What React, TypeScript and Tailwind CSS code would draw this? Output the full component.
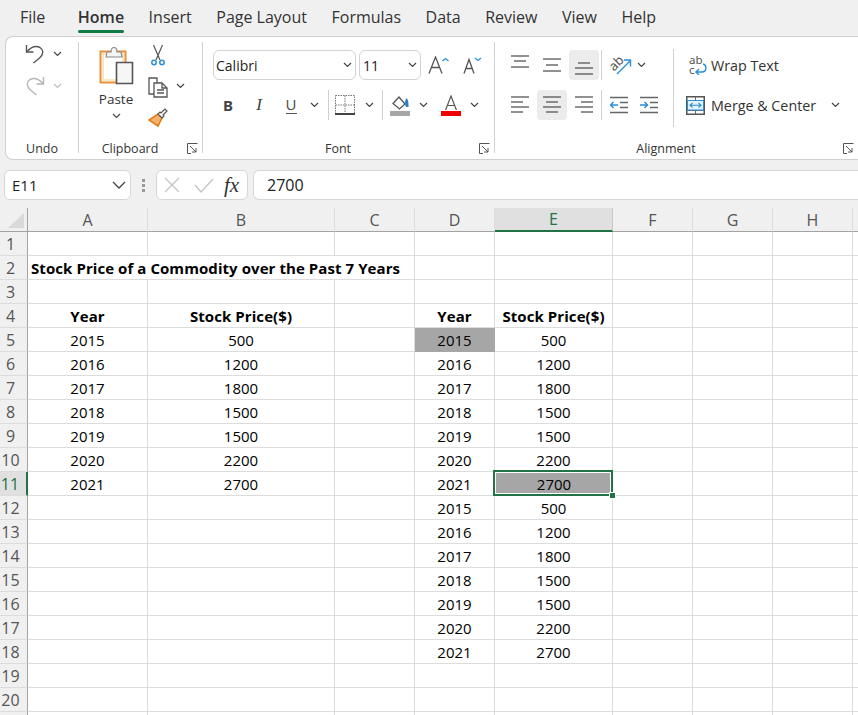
import type { ReactNode } from 'react'

const tabs = ['Insert', 'Page Layout', 'Formulas', 'Data', 'Review', 'View', 'Help']
const columns = ['A', 'B', 'C', 'D', 'E', 'F', 'G', 'H', '']
const years = ['2015', '2016', '2017', '2018', '2019', '2020', '2021']
const prices = ['500', '1200', '1800', '1500', '1500', '2200', '2700']

function Chevron({ muted = false }: { muted?: boolean }) {
  return (
    <svg width="9" height="6" viewBox="0 0 9 6" fill="none" stroke={muted ? '#bdbdbd' : '#444'} strokeWidth="1.2">
      <path d="M1 1l3.500 3.500L8 1" />
    </svg>
  )
}

function Launcher() {
  return (
    <svg width="11" height="11" viewBox="0 0 11 11" fill="none" stroke="#555" strokeWidth="1">
      <path d="M.5 10.500V.5h10M.5 10.500H4" />
      <path d="M3 3l6 6M9 5v4H5" />
    </svg>
  )
}

function GroupLabel({ children, launcher = false }: { children: string; launcher?: boolean }) {
  return (
    <div className="mt-auto mb-[1px] flex h-4 items-center text-[12.5px] text-[#333]">
      <div className="flex-1 text-center">{children}</div>
      {launcher && (
        <div className="-mt-[1px] flex w-[21px] justify-center pl-[2px]">
          <Launcher />
        </div>
      )}
    </div>
  )
}

function Sep({ className }: { className: string }) {
  return <div className={`w-px shrink-0 bg-[#d0d0d0] ${className}`} />
}

// horizontal line glyphs used by the alignment buttons
function Lines({ lines, active = false }: { lines: [number, number, number][]; active?: boolean }) {
  return (
    <div className={`flex h-[30px] w-[30px] items-center justify-center rounded ${active ? 'bg-[#ececec]' : ''}`}>
      <svg width="18" height="22" viewBox="0 0 18 22" fill="none" stroke="#555" strokeWidth="1.3">
        {lines.map(([x1, x2, y]) => (
          <path key={y} d={`M${x1} ${y}H${x2}`} />
        ))}
      </svg>
    </div>
  )
}

function Indent({ right = false }: { right?: boolean }) {
  return (
    <div className="flex h-[30px] w-[30px] items-center justify-center">
      <svg width="18" height="18" viewBox="0 0 18 18" fill="none" strokeWidth="1.3">
        <path d="M0 1.500h18M0 16.500h18M10 6.500h8M10 11.500h8" stroke="#666" />
        <path d={right ? 'M0 9h7.500M4.500 6l3 3-3 3' : 'M8 9H.5M3.500 6l-3 3 3 3'} stroke="#2b8fd6" strokeWidth="1.500" />
      </svg>
    </div>
  )
}

function UndoGroup() {
  return (
    <div className="flex h-[116px] w-[72px] shrink-0 flex-col">
      <div className="ml-[19px] mt-[2px] flex items-center">
        <svg width="20" height="20" viewBox="0 0 20 20" fill="none" stroke="#555" strokeWidth="1.4">
          <path d="M1.500 1v7h7" />
          <path d="M1.500 8C6 3 11 1.500 15 3.500c4 2.500 3.500 7-.5 10.500L8.500 19" />
        </svg>
        <div className="ml-[8px] flex">
          <Chevron />
        </div>
      </div>
      <div className="ml-[19px] mt-[12px] flex items-center">
        <svg width="20" height="20" viewBox="0 0 20 20" fill="none" stroke="#b5b5b5" strokeWidth="1.4">
          <path d="M18.500 1v7h-7" />
          <path d="M18.500 8C14 3 9 1.500 5 3.500c-4 2.500-3.500 7 .5 10.500L11.500 19" />
        </svg>
        <div className="ml-[8px] flex">
          <Chevron muted />
        </div>
      </div>
      <GroupLabel>Undo</GroupLabel>
    </div>
  )
}

function ClipboardGroup() {
  return (
    <div className="flex h-[116px] w-[123px] shrink-0 flex-col">
      <div className="flex">
        <div className="ml-[19px] flex w-[36px] flex-col items-center">
          <svg className="mt-[3px]" width="36" height="40" viewBox="0 0 36 40" fill="none">
            <path d="M2.500 6.500h25v31h-25z" fill="#fff" stroke="#e8903a" strokeWidth="2" />
            <path d="M5 9h20v26H5z" fill="#fff" stroke="#fbdfb0" strokeWidth="1.500" />
            <path d="M8 12l1-5h4c0-6 6-6 6 0h4l1 5z" fill="#f4f4f4" stroke="#888" strokeWidth="1.200" />
            <path d="M18.500 17.500h16v21h-16z" fill="#f6f6f6" stroke="#555" strokeWidth="1.600" />
          </svg>
          <div className="mt-[4px] text-[13.5px] leading-[20px] text-[#333]">Paste</div>
          <div className="mt-[4px] flex">
            <Chevron />
          </div>
        </div>
        <div className="ml-[14px] flex w-[20px] flex-col items-center">
          <svg className="mt-[3px]" width="14" height="21" viewBox="0 0 14 21" fill="none">
            <path d="M2.500 0l6.500 15M11.500 0L5 15" stroke="#555" strokeWidth="1.200" />
            <circle cx="3" cy="17.500" r="2.200" stroke="#2b8fd6" strokeWidth="1.500" />
            <circle cx="11" cy="17.500" r="2.200" stroke="#2b8fd6" strokeWidth="1.500" />
          </svg>
          <svg className="mt-[11px]" width="20" height="21" viewBox="0 0 20 21" fill="none" stroke="#555" strokeWidth="1.300">
            <path d="M6 17H1V1h8v5" />
            <path d="M6 6h8l5 5v9H6z" fill="#fff" />
            <path d="M14 6v5h5M9 13h7M9 16h7" />
          </svg>
          <svg className="mt-[10px]" width="20" height="20" viewBox="0 0 20 20" fill="none">
            <path d="M10 6l4 4-4 8-9-6z" fill="#f2b26b" stroke="#e07c1c" strokeWidth="1.600" />
            <path d="M10 6l4 4 2-2-1-1 4-4-2-2-4 4-1-1z" fill="#fff" stroke="#555" strokeWidth="1.200" />
          </svg>
        </div>
        <div className="ml-[8px] mt-[41px] flex h-[6px]">
          <Chevron />
        </div>
      </div>
      <GroupLabel launcher>Clipboard</GroupLabel>
    </div>
  )
}

function Select({ label, className }: { label: string; className: string }) {
  return (
    <div className={`flex h-[30px] items-center justify-between rounded-md border border-[#d2d2d2] pl-[2px] pr-[3px] text-[14px] text-[#222] ${className}`}>
      <span>{label}</span>
      <Chevron />
    </div>
  )
}

function FontGroup() {
  return (
    <div className="flex h-[116px] w-[291px] shrink-0 flex-col">
      <div className="ml-[10px] mt-[8px] flex items-center">
        <Select label="Calibri" className="w-[143px]" />
        <Select label="11" className="ml-[3px] w-[62px] !pl-[3px]" />
        <svg className="ml-[7px]" width="21" height="18" viewBox="0 0 21 18" fill="none">
          <path d="M1 17.500L7.500 1 14 17.500M3.500 11.500h8" stroke="#555" strokeWidth="1.300" />
          <path d="M14.500 5L17.500 2.500 20.500 5" stroke="#2b8fd6" strokeWidth="1.300" />
        </svg>
        <svg className="ml-[13px]" width="20" height="18" viewBox="0 0 20 18" fill="none">
          <path d="M2 17.500L7 3.500l5 14M3.800 12.500h6.400" stroke="#555" strokeWidth="1.300" />
          <path d="M13 2l3 2.500L19 2" stroke="#2b8fd6" strokeWidth="1.300" />
        </svg>
      </div>
      <div className="ml-[10px] mt-[10px] flex h-[30px] items-center text-[#444]">
        <div className="w-[30px] text-center font-['Noto_Sans'] text-[15px] font-bold">B</div>
        <div className="ml-px w-[30px] text-center font-['Liberation_Serif'] text-[17px] italic">I</div>
        <div className="ml-[2px] flex w-[30px] flex-col items-center">
          <span className="text-[15px] leading-[17px]">U</span>
          <div className="h-[1.500px] w-[11px] bg-[#555]" />
        </div>
        <div className="flex w-[16px] justify-center">
          <Chevron />
        </div>
        <Sep className="ml-[6px] h-[30px]" />
        <svg className="ml-[6px]" width="20" height="20" viewBox="0 0 20 20" fill="none" stroke="#777" strokeWidth="1" strokeDasharray="1.500 1">
          <path d="M.5.5h19v19H.5zM10 .5v19M.5 10h19" />
          <path d="M0 19h20" stroke="#444" strokeWidth="2" strokeDasharray="none" />
        </svg>
        <div className="ml-[6px] flex w-[16px] justify-center">
          <Chevron />
        </div>
        <Sep className="ml-[5px] h-[30px]" />
        <svg className="ml-[7px]" width="20" height="21" viewBox="0 0 20 21" fill="none">
          <path d="M3 8.500L9 2l6 7-5.500 5z" fill="#fff" stroke="#555" strokeWidth="1.300" />
          <path d="M15 9c0-3 .5-5.500 1.500-5.500S18.500 6 18.500 10v2H16z" fill="#2b7fc4" />
          <rect y="16" width="20" height="5" fill="#a6a6a6" />
        </svg>
        <div className="ml-[5px] flex w-[16px] justify-center">
          <Chevron />
        </div>
        <div className="ml-[10px] flex w-[20px] flex-col items-center">
          <svg width="12" height="15" viewBox="0 0 12 15" fill="none" stroke="#555" strokeWidth="1.200">
            <path d="M.6 15L6 1l5.400 14M2.300 10.500h7.400" />
          </svg>
          <div className="mt-[1px] h-[5px] w-[20px] bg-[#f00000]" />
        </div>
        <div className="ml-[5px] flex w-[16px] justify-center">
          <Chevron />
        </div>
      </div>
      <GroupLabel launcher>Font</GroupLabel>
    </div>
  )
}

function WrapIcon() {
  return (
    <div className="relative h-[20px] w-[18px] whitespace-pre-line font-['Noto_Sans',sans-serif] text-[11.5px] leading-[10px] text-[#555]">
      {'ab\nc'}
      <svg className="absolute bottom-0 right-0" width="12" height="12" viewBox="0 0 12 12" fill="none" stroke="#2b8fd6" strokeWidth="1.400">
        <path d="M1 9h6c5 0 5-7 1-8M4 6L1 9l3 3" />
      </svg>
    </div>
  )
}

function AlignmentGroup() {
  return (
    <div className="flex h-[116px] w-[363px] shrink-0 flex-col">
      <div className="flex">
        <div className="ml-[10px] mt-[8px] flex flex-col gap-[10px]">
          <div className="flex items-center gap-[2px]">
            <Lines lines={[[0, 18, 2], [3, 15, 7], [0, 18, 13]]} />
            <Lines lines={[[0, 18, 5], [3, 15, 11], [0, 18, 17]]} />
            <Lines active lines={[[3, 15, 9], [0, 18, 14], [0, 18, 20]]} />
            <Sep className="h-[30px]" />
            <div className="ml-[5px] flex items-center">
              <svg className="overflow-visible" width="22" height="20" viewBox="0 0 22 20" fill="none">
                <text x="0" y="13" transform="rotate(-45 7 9)" fontFamily="Noto Sans, sans-serif" fontSize="13" fill="#555">ab</text>
                <path d="M8 19L21 6M15 5h6.500v6.500" stroke="#2b8fd6" strokeWidth="1.400" />
              </svg>
              <div className="ml-[6px] flex">
                <Chevron />
              </div>
            </div>
          </div>
          <div className="flex items-center gap-[2px]">
            <Lines lines={[[0, 18, 3], [0, 12, 8], [0, 18, 13], [0, 12, 18]]} />
            <Lines active lines={[[0, 18, 3], [3, 15, 8], [0, 18, 13], [3, 15, 18]]} />
            <Lines lines={[[0, 18, 3], [6, 18, 8], [0, 18, 13], [6, 18, 18]]} />
            <Sep className="h-[30px]" />
            <Indent />
            <div className="-ml-[2px]">
              <Indent right />
            </div>
          </div>
        </div>
        <Sep className="ml-[9px] mt-[7px] h-[78px]" />
        <div className="mt-[8px] flex flex-col gap-[10px] text-[14.3px] text-[#333]">
          <div className="ml-[15px] flex h-[30px] items-center">
            <WrapIcon />
            <span className="ml-[4px] pt-[2px]">Wrap Text</span>
          </div>
          <div className="ml-[12px] flex h-[30px] items-center">
            <svg width="19" height="19" viewBox="0 0 19 19" fill="none">
              <rect x=".75" y=".75" width="17.500" height="17.500" fill="#fff" stroke="#555" strokeWidth="1.500" />
              <path d="M1 4.500h17M1 14.500h17M9.500 1v3M9.500 15v3" stroke="#666" />
              <rect x="1.500" y="4.500" width="16" height="9.500" fill="#e4f2fc" stroke="#2b8fd6" />
              <path d="M4 9.250h11M6.500 7L4 9.250l2.500 2.250M12.500 7L15 9.250l-2.500 2.250" stroke="#2b8fd6" strokeWidth="1.100" />
            </svg>
            <span className="ml-[6px] pt-[2px]">Merge &amp; Center</span>
            <div className="ml-[15px] flex">
              <Chevron />
            </div>
          </div>
        </div>
      </div>
      <GroupLabel launcher>Alignment</GroupLabel>
    </div>
  )
}

function Ribbon() {
  return (
    <div className="ml-[5px] flex h-[124px] w-[860px] rounded-l-lg border border-r-0 border-[#d0d0d0] bg-white pt-[5px]">
      <UndoGroup />
      <Sep className="h-[111px]" />
      <ClipboardGroup />
      <Sep className="h-[111px]" />
      <FontGroup />
      <Sep className="h-[111px]" />
      <AlignmentGroup />
    </div>
  )
}

function FormulaBar() {
  return (
    <div className="mt-[10px] flex h-[30px] items-center text-[#222]">
      <div className="ml-[4px] flex h-full w-[127px] items-center justify-between rounded-md border border-[#d6d6d6] bg-white pl-[7px] pr-[4px] text-[15px]">
        <span>E11</span>
        <svg width="14" height="8" viewBox="0 0 14 8" fill="none" stroke="#444" strokeWidth="1.300">
          <path d="M1 1l6 6 6-6" />
        </svg>
      </div>
      <div className="ml-[11px] flex w-[3px] flex-col gap-[2px]">
        <div className="h-[3px] bg-[#999]" />
        <div className="h-[3px] bg-[#999]" />
        <div className="h-[3px] bg-[#999]" />
      </div>
      <div className="ml-[11px] flex h-full w-[92px] items-center rounded-md border border-[#d6d6d6] bg-white pl-[7px]">
        <svg width="16" height="16" viewBox="0 0 16 16" fill="none" stroke="#c4c4c4" strokeWidth="1.300">
          <path d="M1 1l14 14M15 1L1 15" />
        </svg>
        <svg className="ml-[14px]" width="20" height="15" viewBox="0 0 20 15" fill="none" stroke="#c4c4c4" strokeWidth="1.300">
          <path d="M1 7l6 7L19 1" />
        </svg>
        <span className="ml-[10px] font-['Liberation_Serif'] text-[21px] italic leading-none text-[#333]">fx</span>
      </div>
      <div className="ml-[5px] flex h-full flex-1 items-center rounded-l-md border border-r-0 border-[#d6d6d6] bg-white pl-[13px] text-[16px]">
        2700
      </div>
    </div>
  )
}

function ColumnHeader() {
  return (
    <>
      <div className="flex h-[24px] items-end border-b border-r border-[#a3a3a3] pb-[3px] pl-[8px]">
        <div className="h-0 w-0 border-b-[15px] border-l-[16px] border-b-[#d9d9d9] border-l-transparent" />
      </div>
      {columns.map((col) =>
        col === 'E' ? (
          <div key={col} className="flex h-[24px] items-center justify-center border-b-2 border-r border-b-[#217346] border-r-[#c8c8c8] bg-[#e0e0e0] text-[16px] text-[#217346]">
            {col}
          </div>
        ) : (
          <div key={col} className="flex h-[24px] items-center justify-center border-b border-r border-b-[#a3a3a3] border-r-[#dcdcdc] text-[16px] text-[#555]">
            {col}
          </div>
        ),
      )}
    </>
  )
}

function Cell({ children, bold = false, className = '' }: { children?: ReactNode; bold?: boolean; className?: string }) {
  return (
    <div className={`flex h-[24px] items-center justify-center border-b border-r border-[#dcdcdc] bg-white pt-[2px] text-[15px] text-black ${bold ? 'font-bold tracking-[0.07px]' : ''} ${className}`}>
      {children}
    </div>
  )
}

function Row({ n }: { n: number }) {
  const left = n >= 5 && n <= 11 ? n - 5 : -1
  // column D and E hold the two price runs back to back, rows 5 to 18
  const right = n >= 5 && n <= 18 ? (n - 5) % 7 : -1
  const header = n === 4

  return (
    <>
      <div
        className={`flex h-[24px] items-center justify-center border-b border-b-[#dcdcdc] pr-[6px] text-[16px] ${
          n === 11 ? 'border-r-2 border-r-[#217346] bg-[#e0e0e0] text-[#217346]' : 'border-r border-r-[#a3a3a3] text-[#555]'
        }`}
      >
        {n < 21 ? n : ''}
      </div>
      {n === 2 ? (
        <Cell bold className="col-span-3 !justify-start pl-[3px] whitespace-nowrap">
          Stock Price of a Commodity over the Past 7 Years
        </Cell>
      ) : (
        <>
          <Cell bold={header}>{header ? 'Year' : left >= 0 ? years[left] : ''}</Cell>
          <Cell bold={header}>{header ? 'Stock Price($)' : left >= 0 ? prices[left] : ''}</Cell>
          <Cell />
        </>
      )}
      <Cell bold={header} className={n === 5 ? '!border-[#a6a6a6] !bg-[#a6a6a6]' : ''}>
        {header ? 'Year' : right >= 0 ? years[right] : ''}
      </Cell>
      {n === 11 ? (
        <div className="relative flex h-[24px] items-center justify-center bg-[#a6a6a6] pt-[1px] text-[15px] text-black">
          2700
          <div className="absolute -left-[2px] -top-[2px] h-[26px] w-[120px] border-2 border-[#217346] shadow-[inset_0_0_0_1px_#fff]" />
          <div className="absolute -bottom-[3px] -right-[3px] box-content h-[5px] w-[5px] border border-white bg-[#217346]" />
        </div>
      ) : (
        <Cell bold={header}>{header ? 'Stock Price($)' : right >= 0 ? prices[right] : ''}</Cell>
      )}
      <Cell />
      <Cell />
      <Cell />
      <Cell />
    </>
  )
}

export default function App() {
  const rows = Array.from({ length: 21 }, (_, i) => i + 1)

  return (
    <div className="h-[715px] w-[858px] overflow-hidden bg-[#f0f0f0] font-['Open_Sans',sans-serif]">
      <div className="flex h-[36px] items-start gap-[24.5px] pl-[20px] pt-[6px] text-[16px] leading-[22px] text-[#333]">
        <span>File</span>
        <div className="ml-[8px] flex flex-col">
          <span className="font-semibold">Home</span>
          <div className="mt-[2px] h-[2.500px] rounded-full bg-[#107c41]" />
        </div>
        {tabs.map((tab) => (
          <span key={tab}>{tab}</span>
        ))}
      </div>
      <Ribbon />
      <FormulaBar />
      <div className="mt-[8px] grid grid-cols-[28px_120px_187px_80px_80px_118px_80px_80px_80px_20px]">
        <ColumnHeader />
        {rows.map((n) => (
          <Row key={n} n={n} />
        ))}
      </div>
    </div>
  )
}
